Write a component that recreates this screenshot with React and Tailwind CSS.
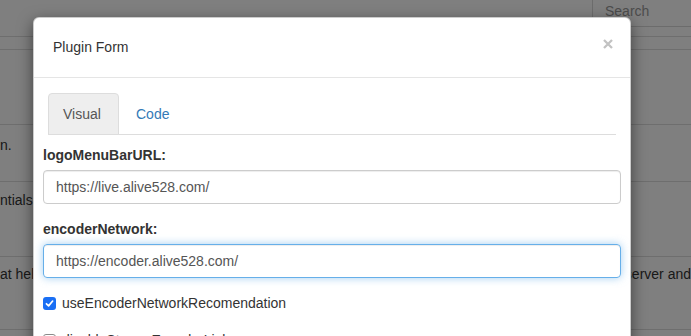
import React from "react";

function Check({ checked }) {
  if (checked) {
    return (
      <span className="flex h-[13px] w-[13px] shrink-0 items-center justify-center rounded-[3px] bg-[#1a6ff4]">
        <svg width="9" height="9" viewBox="0 0 10 10">
          <path d="M1.6 5.3 L4 7.6 L8.5 2.3" fill="none" stroke="#fff" strokeWidth="1.9" strokeLinecap="round" strokeLinejoin="round" />
        </svg>
      </span>
    );
  }
  return <span className="block h-[13px] w-[13px] shrink-0 rounded-[3px] border border-[#8a8a8a] bg-white" />;
}

export default function App() {
  return (
    <div className="relative h-[336px] w-[691px] overflow-hidden bg-white font-['Liberation_Sans',Arial,sans-serif] text-[14px] leading-[20px] text-[#333]">
      {/* page behind */}
      <div className="flex flex-col">
        <div className="flex h-[37px] justify-end border-b border-[#dcdcdc]">
          <div className="h-[27px] w-[99px] border-b border-l border-[#d8d8d8] pl-[12px] pt-[1px] text-[#999]">Search</div>
        </div>
        <div className="h-[13px] border-b border-[#dcdcdc]" />
        <div className="h-[75px] border-b border-[#dcdcdc]" />
        <div className="h-[57px] border-b border-[#dcdcdc] pt-[10px]">n.</div>
        <div className="h-[75px] border-b border-[#dcdcdc] pt-[8px]">ntials</div>
        <div className="flex h-[73px] border-b border-[#dcdcdc] pt-[7px]">
          <span className="w-[630px]">at help</span>
          <span className="whitespace-nowrap">server and</span>
        </div>
        <div className="h-[40px]" />
      </div>

      {/* overlay */}
      <div className="absolute inset-0 bg-black/50" />

      {/* modal */}
      <div className="absolute left-[33px] top-[17px] w-[598px] rounded-[6px] border border-black/20 bg-white shadow-[0_5px_15px_rgba(0,0,0,0.5)]">
        <div className="flex h-[60px] items-center justify-between border-b border-[#e5e5e5] pl-[19px] pr-[17px]">
          <span className="mt-[-2px] text-[#333]">Plugin Form</span>
          <svg className="mb-[8px]" width="10" height="10" viewBox="0 0 10 10">
            <path d="M1 1 L9 9 M9 1 L1 9" stroke="#c2c2c2" strokeWidth="2.3" strokeLinecap="butt" />
          </svg>
        </div>
        <div className="px-[14px] pt-[15px]">
          <div className="flex border-b border-[#ddd]">
            <div className="mb-[-1px] flex h-[42px] w-[71px] items-center rounded-t-[4px] border border-[#ddd] bg-[#eee] px-[14px] text-[#555]">Visual</div>
            <div className="ml-[2px] flex h-[41px] items-center px-[15px] text-[#337ab7]">Code</div>
          </div>
          <div className="mx-[-5px] pt-[10px]">
            <div className="mb-[15px]">
              <div className="mb-[5px] font-bold">logoMenuBarURL:</div>
              <div className="flex h-[34px] items-center rounded-[4px] border border-[#ccc] px-[12px] text-[#555] shadow-[inset_0_1px_1px_rgba(0,0,0,0.075)]">https://live.alive528.com/</div>
            </div>
            <div className="mb-[15px]">
              <div className="mb-[5px] font-bold">encoderNetwork:</div>
              <div className="flex h-[34px] items-center rounded-[4px] border border-[#66afe9] px-[12px] text-[#555] shadow-[inset_0_1px_1px_rgba(0,0,0,0.075),0_0_8px_rgba(102,175,233,0.6)]">https://encoder.alive528.com/</div>
            </div>
            <div className="flex h-[20px] items-center gap-[6px]">
              <Check checked />
              <span>useEncoderNetworkRecomendation</span>
            </div>
            <div className="mt-[17px] flex h-[20px] items-center gap-[6px]">
              <Check />
              <span>disableStreamEncoderLink</span>
            </div>
            <div className="h-[30px]" />
          </div>
        </div>
      </div>
    </div>
  );
}
